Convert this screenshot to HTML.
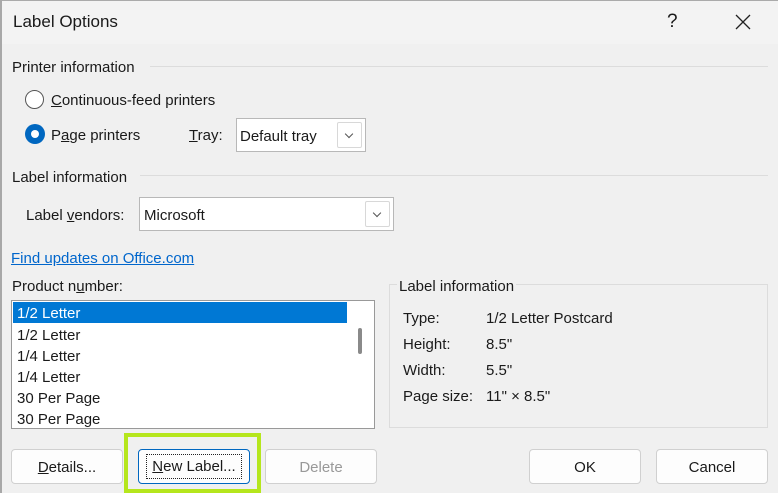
<!DOCTYPE html>
<html><head><meta charset="utf-8"><style>
body{margin:0;width:778px;height:493px;overflow:hidden;background:#f0f0f0;font-family:"Liberation Sans",sans-serif;font-size:15px;color:#1a1a1a;position:relative}
.a{position:absolute;white-space:nowrap}
.u{text-decoration:underline}
.btn{position:absolute;background:#fdfdfd;border:1px solid #d0d0d0;border-radius:4px;text-align:center;line-height:35px;height:35px;box-sizing:border-box}
.combo{position:absolute;background:#fff;border:1px solid #b8b8b8;box-sizing:border-box}
.dd{position:absolute;right:3px;top:3px;bottom:3px;width:23px;border:1px solid #d8d8d8;border-radius:2px}
.dd:after{content:"";position:absolute;left:8px;top:8px;width:5px;height:5px;border-right:1px solid #555;border-bottom:1px solid #555;transform:rotate(45deg)}
.line{position:absolute;height:1px;background:#dcdcdc}
</style></head><body>
<div class="a" style="left:0;top:0;width:778px;height:44px;background:#f3f3f3;border-top:1px solid #aaa;box-sizing:border-box"></div>
<div class="a" style="left:0;top:0;width:2px;height:493px;background:#a8a8a8"></div>
<div class="a" style="left:13px;top:12px;font-size:17px">Label Options</div>
<div class="a" style="left:667px;top:11px;font-size:19px">?</div>
<svg class="a" style="left:735px;top:14px" width="16" height="16"><path d="M1 1L15 15M15 1L1 15" stroke="#222" stroke-width="1.3"/></svg>

<div class="a" style="left:12px;top:59px">Printer information</div>
<div class="line" style="left:150px;top:66px;width:618px"></div>
<div class="a" style="left:25px;top:90px;width:19px;height:19px;border:1px solid #555;border-radius:50%;background:#fff;box-sizing:border-box"></div>
<div class="a" style="left:51px;top:92px"><span class="u">C</span>ontinuous-feed printers</div>
<div class="a" style="left:25px;top:124px;width:20px;height:20px;border-radius:50%;background:#0067c0"></div>
<div class="a" style="left:31px;top:130px;width:8px;height:8px;border-radius:50%;background:#fff"></div>
<div class="a" style="left:51px;top:127px">P<span class="u">a</span>ge printers</div>
<div class="a" style="left:189px;top:127px"><span class="u">T</span>ray:</div>
<div class="combo" style="left:236px;top:118px;width:130px;height:34px"><div class="a" style="left:3px;top:9px">Default tray</div><div class="dd"></div></div>

<div class="a" style="left:12px;top:169px">Label information</div>
<div class="line" style="left:140px;top:175px;width:628px"></div>
<div class="a" style="left:26px;top:207px">Label <span class="u">v</span>endors:</div>
<div class="combo" style="left:139px;top:197px;width:255px;height:34px"><div class="a" style="left:4px;top:9px">Microsoft</div><div class="dd"></div></div>
<div class="a u" style="left:11px;top:250px;color:#0066cc">Find updates on Office.com</div>

<div class="a" style="left:12px;top:278px">Product n<span class="u">u</span>mber:</div>
<div class="a" style="left:11px;top:300px;width:364px;height:129px;border:1px solid #999;background:#fff;box-sizing:border-box"></div>
<div class="a" style="left:13px;top:302px;width:334px;height:21px;background:#0078d4"></div>
<div class="a" style="left:17px;top:305px;color:#fff">1/2 Letter</div>
<div class="a" style="left:17px;top:327px">1/2 Letter</div>
<div class="a" style="left:17px;top:348px">1/4 Letter</div>
<div class="a" style="left:17px;top:369px">1/4 Letter</div>
<div class="a" style="left:17px;top:390px">30 Per Page</div>
<div class="a" style="left:17px;top:411px">30 Per Page</div>
<div class="a" style="left:358px;top:328px;width:4px;height:26px;background:#8a8a8a;border-radius:2px"></div>

<div class="a" style="left:389px;top:284px;width:379px;height:144px;border:1px solid #dcdcdc;box-sizing:border-box"></div>
<div class="a" style="left:397px;top:278px;background:#f0f0f0;padding:0 2px">Label information</div>
<div class="a" style="left:403px;top:310px">Type:</div><div class="a" style="left:486px;top:310px">1/2 Letter Postcard</div>
<div class="a" style="left:403px;top:336px">Height:</div><div class="a" style="left:486px;top:336px">8.5"</div>
<div class="a" style="left:403px;top:362px">Width:</div><div class="a" style="left:486px;top:362px">5.5"</div>
<div class="a" style="left:403px;top:388px">Page size:</div><div class="a" style="left:486px;top:388px">11" × 8.5"</div>

<div class="btn" style="left:11px;top:449px;width:112px"><span class="u">D</span>etails...</div>
<div class="a" style="left:124px;top:433px;width:137px;height:60px;border:4px solid #b5e61d;box-sizing:border-box"></div>
<div class="btn" style="left:138px;top:449px;width:112px;border:1px solid #0067c0;line-height:33px"><span style="border:1px dotted #222;padding:3px 5px"><span class="u">N</span>ew Label...</span></div>
<div class="btn" style="left:265px;top:449px;width:112px;color:#999">Delete</div>
<div class="btn" style="left:529px;top:449px;width:112px">OK</div>
<div class="btn" style="left:656px;top:449px;width:112px">Cancel</div>
</body></html>
